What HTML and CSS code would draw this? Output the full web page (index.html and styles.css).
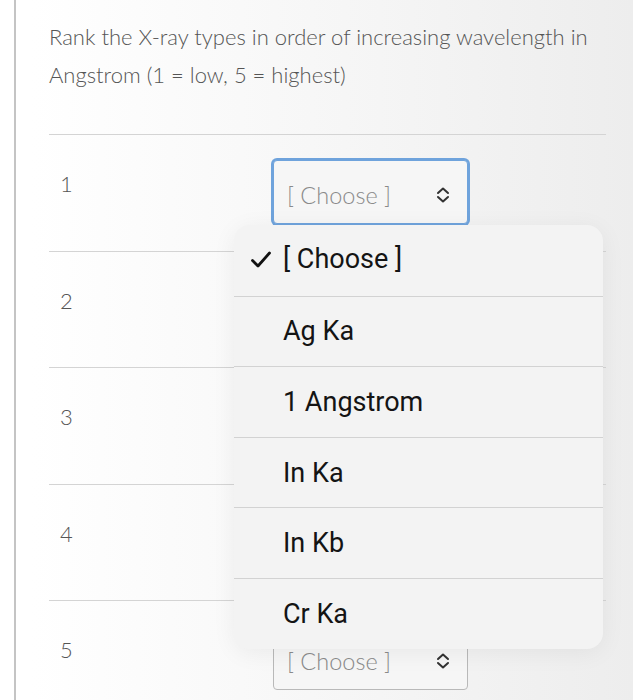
FILE: index.html
```html
<!DOCTYPE html>
<html lang="en">

<head>
    <meta charset="UTF-8">
    <meta name="viewport" content="width=device-width, initial-scale=1.0">
    <title>Rank the X-ray types</title>
    <link rel="stylesheet" href="styles.css">
</head>

<body>
    <div class="page">
        <p class="question">Rank the X-ray types in order of increasing wavelength in Angstrom (1 = low, 5 = highest)</p>

        <div class="rank-table">
            <div class="rank-row">
                <div class="rank-num">1</div>
                <div class="select focused">
                    <span class="select-text">[ Choose ]</span>
                    <svg class="chevrons" width="14" height="16" viewBox="0 0 14 16"><path d="M2 6 L7 1.5 L12 6 M2 10 L7 14.5 L12 10" fill="none" stroke="#333" stroke-width="2" stroke-linecap="round" stroke-linejoin="round"/></svg>
                </div>
            </div>
            <div class="rank-row">
                <div class="rank-num">2</div>
            </div>
            <div class="rank-row">
                <div class="rank-num">3</div>
            </div>
            <div class="rank-row">
                <div class="rank-num">4</div>
            </div>
            <div class="rank-row">
                <div class="rank-num">5</div>
                <div class="select">
                    <span class="select-text">[ Choose ]</span>
                    <svg class="chevrons" width="14" height="16" viewBox="0 0 14 16"><path d="M2 6 L7 1.5 L12 6 M2 10 L7 14.5 L12 10" fill="none" stroke="#333" stroke-width="2" stroke-linecap="round" stroke-linejoin="round"/></svg>
                </div>
            </div>
        </div>

        <ul class="option-menu">
            <li class="option checked">
                <svg class="check" width="22" height="20" viewBox="0 0 22 20"><path d="M2.5 10.5 L8 16 L19.5 3" fill="none" stroke="#111" stroke-width="2.8" stroke-linecap="round" stroke-linejoin="round"/></svg>
                <span>[ Choose ]</span>
            </li>
            <li class="option"><span>Ag Ka</span></li>
            <li class="option"><span>1 Angstrom</span></li>
            <li class="option"><span>In Ka</span></li>
            <li class="option"><span>In Kb</span></li>
            <li class="option"><span>Cr Ka</span></li>
        </ul>
    </div>
</body>

</html>
```

FILE: styles.css
```css
:root {
    --text-gray: #555555;
    --muted-gray: #8a8a8a;
    --line-color: #d4d4d4;
    --edge-color: #c4c4c4;
    --focus-blue: #6fa3dc;
    --menu-bg: #f3f3f3;
    --menu-line: #d2d2d2;
}

html,
body {
    margin: 0;
    height: 100%;
}

body {
    background: linear-gradient(to right, #ffffff 5%, #f5f5f5 60%, #ededed 100%);
    font-family: Lato, "Open Sans", sans-serif;
    overflow: hidden;
}

.page {
    position: relative;
    margin-left: 14px;
    border-left: 2px solid var(--edge-color);
    height: 100%;
    padding: 18px 27px 0 33px;
}

.question {
    margin: 0;
    font-size: 22px;
    font-weight: 300;
    line-height: 38px;
    color: var(--text-gray);
    width: 560px;
}

.rank-table {
    margin-top: 40px;
    border-top: 1px solid var(--line-color);
}

.rank-row {
    display: grid;
    grid-template-columns: 224px 1fr;
    box-sizing: border-box;
    height: 116.5px;
    border-bottom: 1px solid var(--line-color);
}

.rank-num {
    padding: 36px 0 0 11px;
    font-size: 22px;
    font-weight: 300;
    line-height: 26px;
    color: var(--text-gray);
}

.select {
    box-sizing: border-box;
    width: 195px;
    height: 64px;
    margin-top: 25px;
    display: flex;
    align-items: center;
    justify-content: space-between;
    padding: 6px 17px 0 13px;
    border: 1px solid #b9b9b9;
    border-radius: 4px;
    background: #f6f6f6;
}

.select.focused {
    border-color: var(--focus-blue);
    box-shadow: 0 0 0 2px var(--focus-blue);
}

.select-text {
    font-size: 23.5px;
    font-weight: 300;
    color: var(--muted-gray);
}

.option-menu {
    position: absolute;
    left: 218px;
    top: 225px;
    width: 369px;
    margin: 0;
    padding: 0;
    list-style: none;
    background: var(--menu-bg);
    border-radius: 16px;
    box-shadow: 0 4px 24px rgba(0, 0, 0, 0.06);
    overflow: hidden;
}

.option {
    position: relative;
    box-sizing: border-box;
    height: 70.6px;
    display: flex;
    align-items: center;
    padding-left: 49px;
    font-family: Roboto, Inter, sans-serif;
    font-size: 27px;
    color: #141414;
    border-top: 1px solid var(--menu-line);
}

.option:first-child {
    border-top: none;
}

.option.checked {
    padding-bottom: 3px;
}

.check {
    position: absolute;
    left: 16px;
    top: 25px;
}
```
